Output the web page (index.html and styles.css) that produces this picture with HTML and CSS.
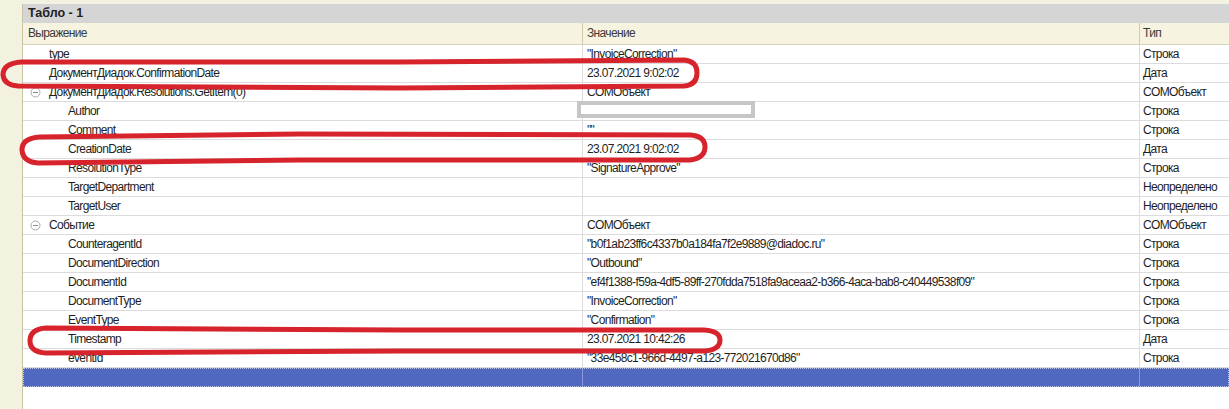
FILE: index.html
```html
<!DOCTYPE html>
<html lang="ru">
<head>
<meta charset="utf-8">
<title>Табло - 1</title>
<link rel="stylesheet" href="styles.css">
</head>
<body>
<div class="page">
  <div class="topstrip"></div>
  <div class="main">
    <div class="gutter"></div>
    <div class="panel">
      <div class="title">Табло - 1</div>
      <div class="grid header">
        <div class="cell c1">Выражение</div>
        <div class="cell c2">Значение</div>
        <div class="cell c3">Тип</div>
      </div>
      <div class="grid row"><div class="cell c1 l0">type</div><div class="cell c2">"InvoiceCorrection"</div><div class="cell c3">Строка</div></div>
      <div class="grid row"><div class="cell c1 l0">ДокументДиадок.ConfirmationDate</div><div class="cell c2">23.07.2021 9:02:02</div><div class="cell c3">Дата</div></div>
      <div class="grid row"><div class="cell c1 l0 group"><svg class="tog" viewBox="0 0 11 11" width="11" height="11"><circle cx="5.5" cy="5.5" r="4.5" fill="none" stroke="#a9a9a9" stroke-width="1"/><line x1="3" y1="5.5" x2="8" y2="5.5" stroke="#8a8a8a" stroke-width="1"/></svg>ДокументДиадок.Resolutions.GetItem(0)</div><div class="cell c2">COMОбъект</div><div class="cell c3">COMОбъект</div></div>
      <div class="grid row"><div class="cell c1 l1">Author</div><div class="cell c2"></div><div class="cell c3">Строка</div></div>
      <div class="grid row"><div class="cell c1 l1">Comment</div><div class="cell c2">""</div><div class="cell c3">Строка</div></div>
      <div class="grid row"><div class="cell c1 l1">CreationDate</div><div class="cell c2">23.07.2021 9:02:02</div><div class="cell c3">Дата</div></div>
      <div class="grid row"><div class="cell c1 l1">ResolutionType</div><div class="cell c2">"SignatureApprove"</div><div class="cell c3">Строка</div></div>
      <div class="grid row"><div class="cell c1 l1">TargetDepartment</div><div class="cell c2"></div><div class="cell c3">Неопределено</div></div>
      <div class="grid row"><div class="cell c1 l1">TargetUser</div><div class="cell c2"></div><div class="cell c3">Неопределено</div></div>
      <div class="grid row"><div class="cell c1 l0 group"><svg class="tog" viewBox="0 0 11 11" width="11" height="11"><circle cx="5.5" cy="5.5" r="4.5" fill="none" stroke="#a9a9a9" stroke-width="1"/><line x1="3" y1="5.5" x2="8" y2="5.5" stroke="#8a8a8a" stroke-width="1"/></svg>Событие</div><div class="cell c2">COMОбъект</div><div class="cell c3">COMОбъект</div></div>
      <div class="grid row"><div class="cell c1 l1">CounteragentId</div><div class="cell c2">"b0f1ab23ff6c4337b0a184fa7f2e9889@diadoc.ru"</div><div class="cell c3">Строка</div></div>
      <div class="grid row"><div class="cell c1 l1">DocumentDirection</div><div class="cell c2">"Outbound"</div><div class="cell c3">Строка</div></div>
      <div class="grid row"><div class="cell c1 l1">DocumentId</div><div class="cell c2">"ef4f1388-f59a-4df5-89ff-270fdda7518fa9aceaa2-b366-4aca-bab8-c40449538f09"</div><div class="cell c3">Строка</div></div>
      <div class="grid row"><div class="cell c1 l1">DocumentType</div><div class="cell c2">"InvoiceCorrection"</div><div class="cell c3">Строка</div></div>
      <div class="grid row"><div class="cell c1 l1">EventType</div><div class="cell c2">"Confirmation"</div><div class="cell c3">Строка</div></div>
      <div class="grid row"><div class="cell c1 l1">Timestamp</div><div class="cell c2">23.07.2021 10:42:26</div><div class="cell c3">Дата</div></div>
      <div class="grid row"><div class="cell c1 l1">eventId</div><div class="cell c2">"33e458c1-966d-4497-a123-772021670d86"</div><div class="cell c3">Строка</div></div>
      <div class="grid row selected"><div class="cell c1"></div><div class="cell c2"></div><div class="cell c3"></div></div>
      <div class="empty"></div>
    </div>
  </div>
  <svg class="marks" viewBox="0 0 1229 409" width="1229" height="409">
    <rect x="579" y="103" width="174" height="13" fill="#ffffff" stroke="#c6c6c6" stroke-width="4"/>
    <g fill="none" stroke="#d6232c" stroke-width="5" stroke-linejoin="round" stroke-linecap="round">
      <path d="M22 62 L400 62 L684 60 Q697 61 697 73 Q697 85 684 86 L400 88 L18 86 Q4 85 3 75 Q3 63 22 62 Z"/>
      <path d="M40 137 L300 134 L690 135 Q705 136 705 147 Q705 158 690 160 L300 160 L38 163 Q23 162 22 150 Q22 138 40 137 Z"/>
      <path d="M46 328 L400 330 L704 330 Q720 331 720 340 Q720 350 704 351 L400 351 L46 353 Q30 352 30 341 Q30 329 46 328 Z"/>
    </g>
  </svg>
</div>
</body>
</html>
```
FILE: styles.css
```css
html, body {
  margin: 0;
  padding: 0;
}
body {
  width: 1229px;
  height: 409px;
  overflow: hidden;
  background: #f3f1df;
  font-family: "Liberation Sans", Arial, sans-serif;
  font-size: 12px;
  letter-spacing: -0.65px;
  color: #1e1e1e;
}
.page {
  position: relative;
  width: 1229px;
  height: 409px;
  display: flex;
  flex-direction: column;
}
.topstrip {
  height: 4px;
  flex: none;
}
.main {
  flex: 1;
  display: flex;
  min-height: 0;
}
.gutter {
  width: 22px;
  flex: none;
  border-right: 1px solid #c9c4a6;
}
.panel {
  flex: 1;
  display: flex;
  flex-direction: column;
  background: #ffffff;
  min-width: 0;
}
.title {
  height: 19px;
  line-height: 19px;
  flex: none;
  background: #d5d5d5;
  padding-left: 5px;
  font-weight: bold;
  font-size: 12.5px;
  letter-spacing: 0;
  color: #222222;
  box-sizing: border-box;
}
.grid {
  display: grid;
  grid-template-columns: 559px 557px 1fr;
  flex: none;
}
.header {
  height: 22px;
  background: #f6f3e1;
  border-bottom: 1px solid #d9d3b8;
  box-sizing: border-box;
  color: #3a3a3a;
}
.header .cell {
  line-height: 21px;
  padding-left: 5px;
}
.header .c2, .header .c3 {
  border-left: 1px solid #d2caa8;
}
.header .c2 { padding-left: 4px; }
.header .c3 { padding-left: 3px; }
.cell {
  white-space: nowrap;
  overflow: hidden;
  box-sizing: border-box;
}
.row {
  height: 19px;
  border-bottom: 1px solid #dcdcdc;
  box-sizing: border-box;
}
.row .cell {
  line-height: 19px;
}
.row .c2, .row .c3 {
  border-left: 1px solid #dcdcdc;
}
.row .c2 { padding-left: 4px; }
.row .c3 { padding-left: 3px; }
.l0 { padding-left: 26px; }
.l1 { padding-left: 45px; }
.group {
  display: flex;
  align-items: center;
  padding-left: 7px;
}
.tog {
  flex: none;
  margin-right: 8px;
}
.selected {
  background: #5068bf;
  outline: 1px dotted #b9c2e6;
  outline-offset: -1px;
  border-bottom: none;
}
.selected .c2, .selected .c3 {
  border-left: 1px solid #8797d6;
}
.empty {
  flex: 1;
  background: #ffffff;
}
.marks {
  position: absolute;
  left: 0;
  top: 0;
  pointer-events: none;
}
```
